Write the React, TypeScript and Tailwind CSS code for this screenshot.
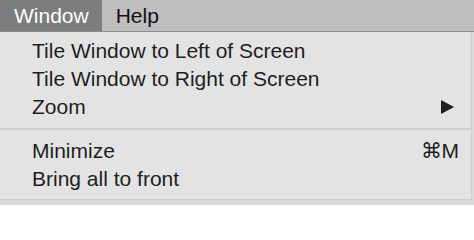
import React from "react";

export default function App() {
  const font = { fontFamily: '"Liberation Sans", Arial, sans-serif' };
  return (
    <div className="w-[474px] h-[205px] overflow-hidden bg-[#dadada] text-[21px] leading-[28px] text-[#1e1e1e]" style={font}>
      <div className="flex h-[32px] bg-[#bebebe] border-b border-[#8c8c8c]">
        <div className="flex items-center bg-[#7c7c7c] text-white pl-[14px] pr-[13px]">Window</div>
        <div className="flex items-center px-[14px] text-[#111]">Help</div>
      </div>
      <div className="w-[472px] h-[168px] bg-[#e3e3e3] border-r border-b border-[#cdcdcd] pt-[5px]">
        <div className="pl-[32px] h-[28px] flex items-center">Tile Window to Left of Screen</div>
        <div className="pl-[32px] h-[28px] flex items-center">Tile Window to Right of Screen</div>
        <div className="pl-[32px] pr-[17px] h-[28px] flex items-center justify-between">
          <span>Zoom</span>
          <svg width="13" height="14" viewBox="0 0 13 14">
            <polygon points="0,0 13,7 0,14" fill="#1e1e1e" />
          </svg>
        </div>
        <div className="h-[2px] bg-[#cfcfcf] my-[7px]" />
        <div className="pl-[32px] pr-[12px] h-[28px] flex items-center justify-between">
          <span>Minimize</span>
          <span>⌘M</span>
        </div>
        <div className="pl-[32px] h-[28px] flex items-center">Bring all to front</div>
      </div>
    </div>
  );
}
